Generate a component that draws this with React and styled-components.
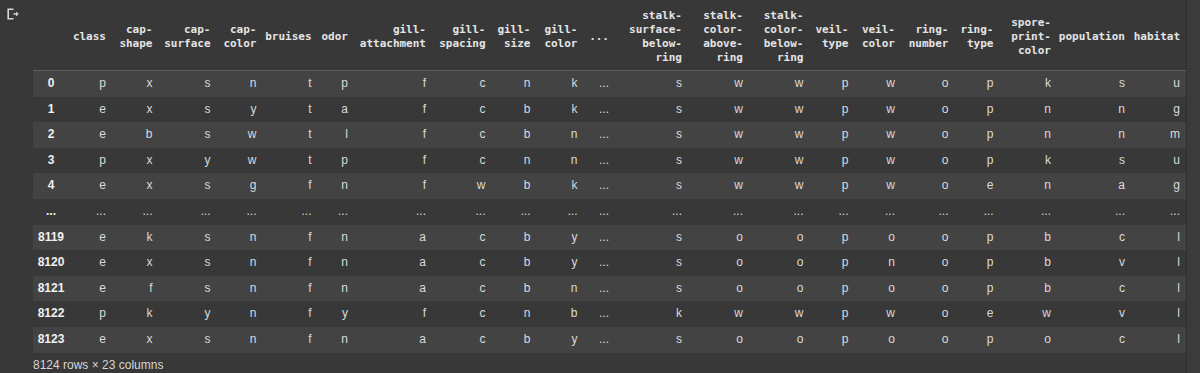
import React from "react";
import styled, { createGlobalStyle } from "styled-components";

const GlobalStyle = createGlobalStyle`
  html, body {
    margin: 0;
    padding: 0;
    background: #383838;
  }
  body {
    font-family: "Liberation Sans", Arial, sans-serif;
  }
`;

const Page = styled.div`
  display: flex;
  width: 1200px;
  height: 373px;
  overflow: hidden;
  background: #383838;
`;

const OutputArea = styled.div`
  flex: 0 0 1187px;
  display: flex;
  padding-top: 2px;
  box-sizing: border-box;
  border-right: 1px solid #303030;
`;

const Gutter = styled.div`
  flex: 0 0 33px;
  padding: 5px 0 0 6px;
  box-sizing: border-box;
`;

const Content = styled.div`
  display: flex;
  flex-direction: column;
`;

const ScrollStrip = styled.div`
  flex: 1;
  background: #3b3b3b;
`;

const Table = styled.table`
  border-collapse: collapse;
  border-spacing: 0;
  table-layout: fixed;
  width: 1153px;
  color: #dcdcdc;
`;

const HeadCell = styled.th`
  font-family: "DejaVu Sans Mono", "Liberation Mono", monospace;
  font-weight: bold;
  font-size: 11px;
  line-height: 14px;
  color: #e4e4e4;
  text-align: right;
  vertical-align: middle;
  padding: 7px 6px 5px 0;
  border-bottom: 1px solid #5e5e5e;
  white-space: pre-line;
  overflow: visible;
`;

const Row = styled.tr`
  background: ${(p) => (p.$striped ? "#434343" : "transparent")};
`;

const IndexCell = styled.th`
  font-family: "Liberation Sans", Arial, sans-serif;
  font-weight: bold;
  font-size: 12px;
  line-height: 15.6px;
  color: #f0f0f0;
  text-align: center;
  padding: 5px 0;
  white-space: nowrap;
`;

const Cell = styled.td`
  font-family: "Liberation Sans", Arial, sans-serif;
  font-size: 12px;
  line-height: 15.6px;
  color: #dadada;
  text-align: right;
  padding: 5px 6px 5px 0;
  white-space: nowrap;
`;

const Footer = styled.div`
  font-family: "Liberation Sans", Arial, sans-serif;
  font-size: 12px;
  color: #d6d6d6;
  padding-top: 5px;
  line-height: 14px;
`;

const OutputIcon = () => (
  <svg width="16" height="14" viewBox="0 0 16 14" fill="none">
    <path
      d="M7.5 2.2 H2.2 V11.8 H7.5"
      stroke="#d8d8d8"
      strokeWidth="1.6"
      fill="none"
    />
    <path d="M7.5 7 H10.5" stroke="#cfcfcf" strokeWidth="1.6" />
    <path d="M10 4.6 L12.8 7 L10 9.4 Z" fill="#cfcfcf" />
  </svg>
);

const columns = [
  { label: "", w: 36 },
  { label: "class", w: 43 },
  { label: "cap-\nshape", w: 46.5 },
  { label: "cap-\nsurface", w: 58 },
  { label: "cap-\ncolor", w: 46 },
  { label: "bruises", w: 55 },
  { label: "odor", w: 36.5 },
  { label: "gill-\nattachment", w: 78 },
  { label: "gill-\nspacing", w: 59.5 },
  { label: "gill-\nsize", w: 45 },
  { label: "gill-\ncolor", w: 47 },
  { label: "...", w: 31.5 },
  { label: "stalk-\nsurface-\nbelow-\nring", w: 73 },
  { label: "stalk-\ncolor-\nabove-\nring", w: 61 },
  { label: "stalk-\ncolor-\nbelow-\nring", w: 60.5 },
  { label: "veil-\ntype", w: 45 },
  { label: "veil-\ncolor", w: 46.5 },
  { label: "ring-\nnumber", w: 53.5 },
  { label: "ring-\ntype", w: 45 },
  { label: "spore-\nprint-\ncolor", w: 57.5 },
  { label: "population", w: 74 },
  { label: "habitat", w: 55 },
];

const rows = [
  ["0", "p x s n t p f c n k ... s w w p w o p k s u"],
  ["1", "e x s y t a f c b k ... s w w p w o p n n g"],
  ["2", "e b s w t l f c b n ... s w w p w o p n n m"],
  ["3", "p x y w t p f c n n ... s w w p w o p k s u"],
  ["4", "e x s g f n f w b k ... s w w p w o e n a g"],
  ["...", "... ... ... ... ... ... ... ... ... ... ... ... ... ... ... ... ... ... ... ... ..."],
  ["8119", "e k s n f n a c b y ... s o o p o o p b c l"],
  ["8120", "e x s n f n a c b y ... s o o p n o p b v l"],
  ["8121", "e f s n f n a c b n ... s o o p o o p b c l"],
  ["8122", "p k y n f y f c n b ... k w w p w o e w v l"],
  ["8123", "e x s n f n a c b y ... s o o p o o p o c l"],
].map(([idx, vals]) => ({ idx, vals: vals.split(" ") }));

export default function App() {
  return (
    <>
      <GlobalStyle />
      <Page>
        <OutputArea>
          <Gutter>
            <OutputIcon />
          </Gutter>
          <Content>
            <Table>
              <colgroup>
                {columns.map((c, i) => (
                  <col key={i} style={{ width: `${c.w}px` }} />
                ))}
              </colgroup>
              <thead>
                <tr>
                  {columns.map((c, i) => (
                    <HeadCell key={i}>{c.label}</HeadCell>
                  ))}
                </tr>
              </thead>
              <tbody>
                {rows.map((r, ri) => (
                  <Row key={ri} $striped={ri % 2 === 0}>
                    <IndexCell>{r.idx}</IndexCell>
                    {r.vals.map((v, vi) => (
                      <Cell key={vi}>{v}</Cell>
                    ))}
                  </Row>
                ))}
              </tbody>
            </Table>
            <Footer>8124 rows × 23 columns</Footer>
          </Content>
        </OutputArea>
        <ScrollStrip />
      </Page>
    </>
  );
}
